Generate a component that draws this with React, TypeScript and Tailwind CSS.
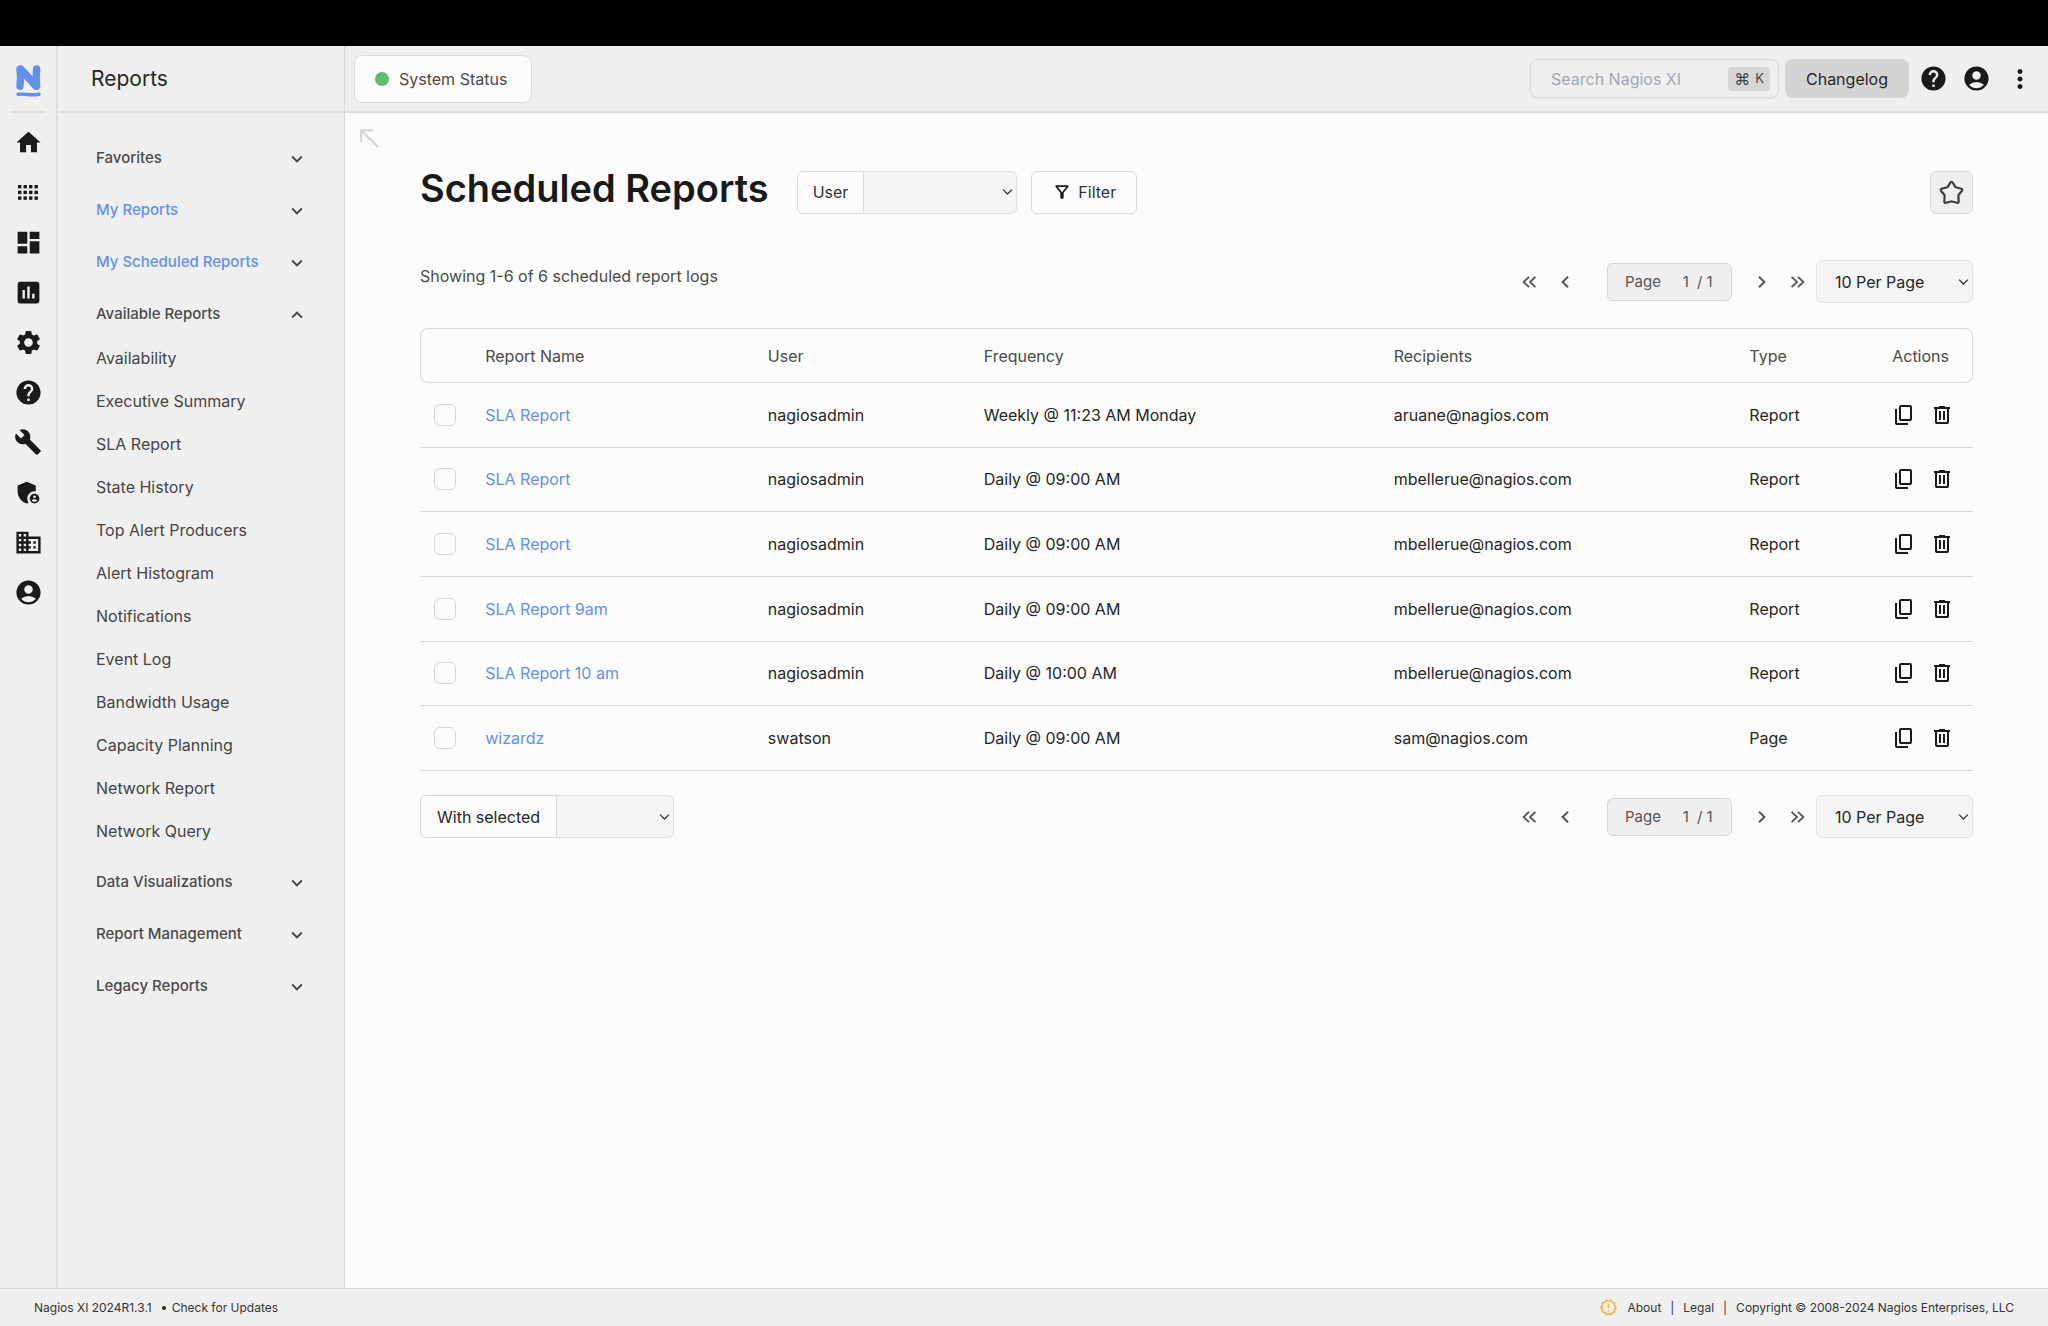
import { useState } from 'react';
import {
  MdHome,
  MdDashboard,
  MdAssessment,
  MdSettings,
  MdHelp,
  MdBuild,
  MdAdminPanelSettings,
  MdDomain,
  MdAccountCircle,
  MdMoreVert,
  MdExpandMore,
  MdExpandLess,
  MdOutlineFilterAlt,
  MdOutlineNewReleases,
} from 'react-icons/md';

const reportItems = [
  'Availability',
  'Executive Summary',
  'SLA Report',
  'State History',
  'Top Alert Producers',
  'Alert Histogram',
  'Notifications',
  'Event Log',
  'Bandwidth Usage',
  'Capacity Planning',
  'Network Report',
  'Network Query',
];

const sections = [
  { title: 'Favorites' },
  { title: 'My Reports', active: true },
  { title: 'My Scheduled Reports', active: true },
  { title: 'Available Reports', items: reportItems },
  { title: 'Data Visualizations' },
  { title: 'Report Management' },
  { title: 'Legacy Reports' },
];

const reports = [
  { name: 'SLA Report', user: 'nagiosadmin', frequency: 'Weekly @ 11:23 AM Monday', recipients: 'aruane@nagios.com', type: 'Report' },
  { name: 'SLA Report', user: 'nagiosadmin', frequency: 'Daily @ 09:00 AM', recipients: 'mbellerue@nagios.com', type: 'Report' },
  { name: 'SLA Report', user: 'nagiosadmin', frequency: 'Daily @ 09:00 AM', recipients: 'mbellerue@nagios.com', type: 'Report' },
  { name: 'SLA Report 9am', user: 'nagiosadmin', frequency: 'Daily @ 09:00 AM', recipients: 'mbellerue@nagios.com', type: 'Report' },
  { name: 'SLA Report 10 am', user: 'nagiosadmin', frequency: 'Daily @ 10:00 AM', recipients: 'mbellerue@nagios.com', type: 'Report' },
  { name: 'wizardz', user: 'swatson', frequency: 'Daily @ 09:00 AM', recipients: 'sam@nagios.com', type: 'Page' },
];

function AppsIcon() {
  return (
    <svg viewBox="0 0 20 15" className="w-5" fill="currentColor">
      {[0, 5.7, 11.4].map((y) =>
        [0, 5.5, 11, 16.5].map((x) => <rect key={`${x}-${y}`} x={x} y={y} width="3.4" height="3.4" />)
      )}
    </svg>
  );
}

const railItems = [
  { label: 'Home', icon: <MdHome size={29} /> },
  { label: 'Views', icon: <AppsIcon /> },
  { label: 'Dashboards', icon: <MdDashboard size={29} /> },
  { label: 'Reports', icon: <MdAssessment size={29} /> },
  { label: 'Configure', icon: <MdSettings size={29} /> },
  { label: 'Help', icon: <MdHelp size={29} /> },
  { label: 'Tools', icon: <MdBuild size={28} /> },
  { label: 'Admin', icon: <MdAdminPanelSettings size={29} /> },
  { label: 'Enterprise', icon: <MdDomain size={29} /> },
  { label: 'Account', icon: <MdAccountCircle size={29} /> },
];

function Logo() {
  return (
    <svg viewBox="0 0 25 32" className="w-[25px]" fill="none" stroke="#6190f3" strokeLinecap="round" strokeLinejoin="round">
      <path d="M4 4.2 4.6 12 4 21.2M20.6 4 20.2 12 20.6 21.2" strokeWidth="7.4" />
      <path d="M5 4.6 19.8 20.6" strokeWidth="8" />
      <path d="M2 29.2Q7 28.9 12 29.5T23 29.2" strokeWidth="3.4" />
    </svg>
  );
}

function SelectChevron() {
  return (
    <svg
      viewBox="0 0 12 8"
      className="pointer-events-none absolute right-1 top-1/2 w-[11px] -translate-y-1/2"
      fill="none"
      stroke="#333"
      strokeWidth="1.4"
    >
      <path d="M1.2 1.4 6 6.2 10.8 1.4" />
    </svg>
  );
}

function Pagination({ id }: { id: string }) {
  const [page, setPage] = useState('1');
  const arrow = 'flex h-9 w-9 items-center justify-center text-[#555]';

  return (
    <div className="flex items-center">
      <button type="button" aria-label="First page" className={arrow}>
        <svg viewBox="0 0 16 12" className="w-4" fill="none" stroke="currentColor" strokeWidth="1.8">
          <path d="M8 .8 2.6 6 8 11.2M14.4.8 9 6l5.4 5.2" />
        </svg>
      </button>
      <button type="button" aria-label="Previous page" className={arrow}>
        <svg viewBox="0 0 16 12" className="w-4" fill="none" stroke="currentColor" strokeWidth="2">
          <path d="M11 .8 5.6 6l5.4 5.2" />
        </svg>
      </button>
      <div className="ml-6 mr-3 flex h-[38px] w-[125px] items-center rounded-md border border-[#d6d6d6] bg-[#efefef] pl-[17px] text-[15px] leading-6 text-[#555]">
        <label htmlFor={id}>Page</label>
        <input
          id={id}
          value={page}
          onChange={(e) => setPage(e.target.value)}
          className="w-[28px] bg-transparent text-right focus:outline-none"
        />
        <span className="ml-2">/ 1</span>
      </div>
      <button type="button" aria-label="Next page" className={arrow}>
        <svg viewBox="0 0 16 12" className="w-4" fill="none" stroke="currentColor" strokeWidth="2">
          <path d="M5 .8 10.4 6 5 11.2" />
        </svg>
      </button>
      <button type="button" aria-label="Last page" className={arrow}>
        <svg viewBox="0 0 16 12" className="w-4" fill="none" stroke="currentColor" strokeWidth="1.8">
          <path d="M1.6.8 7 6l-5.4 5.2M8 .8 13.4 6 8 11.2" />
        </svg>
      </button>
      <div className="relative">
        <select
          aria-label="Rows per page"
          className="h-[43px] w-[157px] appearance-none rounded-md border border-[#e2e2e2] bg-[#f4f4f4] pl-[18px] text-base text-[#262626]"
        >
          <option>10 Per Page</option>
          <option>25 Per Page</option>
          <option>50 Per Page</option>
        </select>
        <SelectChevron />
      </div>
    </div>
  );
}

export default function App() {
  const [search, setSearch] = useState('');

  return (
    <div className="flex min-h-screen flex-col bg-[#fbfbfb] font-['Inter','Liberation_Sans',sans-serif] text-base text-[#262626]">
      <div className="h-[46px] bg-black" />

      <div className="flex flex-1">
        <nav className="flex w-[58px] shrink-0 flex-col items-center border-r-2 border-[#dedede] bg-[#efefef] pt-[19px] text-[#1a1a1a]">
          <a href="#" aria-label="Nagios XI">
            <Logo />
          </a>
          <div className="mb-1 mt-[14px] h-[2px] w-[35px] bg-[#dedede]" />
          {railItems.map((item) => (
            <a key={item.label} href="#" aria-label={item.label} className="flex h-[50px] w-full items-center justify-center">
              {item.icon}
            </a>
          ))}
        </nav>

        <aside className="w-[287px] shrink-0 border-r border-[#d9d9d9] bg-[#efefef]">
          <div className="flex h-[67px] items-center border-b-2 border-[#dedede] pl-[33px] text-[21px] text-[#262626]">
            Reports
          </div>
          <div className="flex flex-col gap-[9px] pl-[38px] pr-9 pt-6 text-[#4a4a4a]">
            {sections.map((s) => (
              <div key={s.title}>
                <button
                  type="button"
                  className={`flex h-[43px] w-full items-center justify-between text-[15px] font-medium ${s.active ? 'text-[#6190f3]' : ''}`}
                >
                  {s.title}
                  {s.items ? <MdExpandLess size={22} color="#444" /> : <MdExpandMore size={22} color="#444" />}
                </button>
                {s.items?.map((item) => (
                  <a key={item} href="#" className="flex h-[43px] items-center text-[#444]">
                    {item}
                  </a>
                ))}
              </div>
            ))}
          </div>
        </aside>

        <div className="flex flex-1 flex-col">
          <header className="flex h-[67px] items-center justify-between border-b-2 border-[#dedede] bg-[#efefef] pl-[9px] pr-[13px]">
            <button
              type="button"
              className="flex h-12 items-center gap-[10px] rounded-lg border border-[#dcdcdc] bg-[#fbfbfb] pl-5 pr-6 text-[#4a4a4a]"
            >
              <span className="h-[14px] w-[14px] rounded-full bg-[#5bc068]" />
              System Status
            </button>
            <div className="flex items-center">
              <div className="flex h-[39px] w-[249px] items-center rounded-lg border border-[#dadada] pl-5 pr-2 shadow-xs">
                <input
                  type="text"
                  aria-label="Search Nagios XI"
                  value={search}
                  onChange={(e) => setSearch(e.target.value)}
                  placeholder="Search Nagios XI"
                  className="min-w-0 flex-1 bg-transparent placeholder:text-[#a3a7b3] focus:outline-none"
                />
                <kbd className="flex h-6 w-[42px] items-center justify-center gap-[5px] rounded bg-[#d6d6d6] font-['Inter','DejaVu_Sans',sans-serif] text-[13px] text-[#444]">
                  <span className="text-base">⌘</span>
                  <span>K</span>
                </kbd>
              </div>
              <button type="button" className="ml-[6px] h-[39px] w-[124px] rounded-lg bg-[#d4d4d4]">
                Changelog
              </button>
              <button type="button" aria-label="Help" className="ml-[10px] text-[#1a1a1a]">
                <MdHelp size={29} />
              </button>
              <button type="button" aria-label="Account" className="ml-[14px] text-[#1a1a1a]">
                <MdAccountCircle size={29} />
              </button>
              <button type="button" aria-label="More" className="ml-[14px] text-[#1a1a1a]">
                <MdMoreVert size={30} />
              </button>
            </div>
          </header>

          <main className="flex-1">
            <button type="button" aria-label="Collapse sidebar" className="ml-[15px] mt-4 block text-[#d2d2d2]">
              <svg viewBox="0 0 19 19" className="w-[19px]" fill="none" stroke="currentColor" strokeWidth="2">
                <path d="M1.2 13V1.2H13M1.2 1.2 18 18" />
              </svg>
            </button>

            <div className="px-[75px] pt-[22px]">
              <div className="flex items-center">
                <h1 className="pb-2 text-[38px] font-semibold leading-9 text-[#1a1a1a]">Scheduled Reports</h1>
                <div className="ml-7 flex">
                  <label
                    htmlFor="user"
                    className="flex h-[43px] items-center rounded-l-md border border-[#dcdcdc] px-[15px] text-[#333]"
                  >
                    User
                  </label>
                  <div className="relative">
                    <select
                      id="user"
                      className="h-[43px] w-[153px] appearance-none rounded-r-md border border-l-0 border-[#e0e0e0] bg-[#f4f4f4]"
                    >
                      <option></option>
                    </select>
                    <SelectChevron />
                  </div>
                </div>
                <button
                  type="button"
                  className="ml-[14px] flex h-[43px] items-center gap-[6px] rounded-md border border-[#dcdcdc] px-5 text-[#333]"
                >
                  <MdOutlineFilterAlt size={20} color="#1a1a1a" />
                  Filter
                </button>
                <button
                  type="button"
                  aria-label="Add to favorites"
                  className="ml-auto flex h-[43px] w-[43px] items-center justify-center rounded-md border border-[#d9d9d9] bg-[#efefef] text-[#3c3c3c]"
                >
                  <svg viewBox="0 0 24 24" className="w-[25px]" fill="none" stroke="currentColor" strokeWidth="2.1">
                    <path d="M10.9 2.4Q12 .9 13.1 2.4L15.6 6.6Q15.8 6.9 16.2 7L21.4 8.4Q23.2 9 22 10.5L18.9 14.2Q18.6 14.6 18.6 15L18.9 20.6Q18.9 22.3 17.4 21.9L12.4 20.6Q12 20.5 11.6 20.6L6.6 21.9Q5.1 22.3 5.1 20.6L5.4 15Q5.4 14.6 5.1 14.2L2 10.5Q.8 9 2.6 8.4L7.8 7Q8.2 6.9 8.4 6.6Z" />
                  </svg>
                </button>
              </div>

              <div className="mt-[46px] flex items-center justify-between">
                <p className="pb-3 text-[#4a4a4a]">Showing 1-6 of 6 scheduled report logs</p>
                <Pagination id="page-top" />
              </div>

              <table className="mt-[25px] h-[443px] w-full table-fixed border-separate border-spacing-0 text-left">
                <thead>
                  <tr className="text-[#4a4a4a] *:h-[55px] *:border-y *:border-[#dcdcdc] *:font-normal">
                    <th className="w-[4.2%] rounded-l-lg border-l" />
                    <th className="w-[18.2%]">Report Name</th>
                    <th className="w-[13.9%]">User</th>
                    <th className="w-[26.4%]">Frequency</th>
                    <th className="w-[22.9%]">Recipients</th>
                    <th className="w-[9.2%]">Type</th>
                    <th className="rounded-r-lg border-r">Actions</th>
                  </tr>
                </thead>
                <tbody>
                  {reports.map((r, i) => (
                    <tr key={i} className="*:border-b *:border-[#d9d9d9]">
                      <td>
                        <input
                          type="checkbox"
                          aria-label={`Select ${r.name}`}
                          className="ml-[14px] block h-[22px] w-[22px] appearance-none rounded-md border border-[#d6d6d6] checked:bg-[#6190f3]"
                        />
                      </td>
                      <td>
                        <a href="#" className="text-[#6190f3]">
                          {r.name}
                        </a>
                      </td>
                      <td>{r.user}</td>
                      <td>{r.frequency}</td>
                      <td>{r.recipients}</td>
                      <td>{r.type}</td>
                      <td>
                        <div className="flex gap-[14px] text-[#1a1a1a]">
                          <button type="button" aria-label="Copy">
                            <svg viewBox="0 0 24 24" className="w-6" fill="currentColor">
                              <path d="M9 18q-.825 0-1.413-.588T7 16V4q0-.825.587-1.413T9 2h9q.825 0 1.413.587T20 4v12q0 .825-.588 1.412T18 18H9Zm0-2h9V4H9v12Zm-4 6q-.825 0-1.413-.588T3 20V6h2v14h11v2H5Z" />
                            </svg>
                          </button>
                          <button type="button" aria-label="Delete">
                            <svg viewBox="0 0 24 24" className="w-6" fill="currentColor">
                              <path d="M7 21q-.825 0-1.413-.588T5 19V6H4V4h5V3h6v1h5v2h-1v13q0 .825-.588 1.413T17 21H7ZM17 6H7v13h10V6ZM9 17h2V8H9v9Zm4 0h2V8h-2v9Z" />
                            </svg>
                          </button>
                        </div>
                      </td>
                    </tr>
                  ))}
                </tbody>
              </table>

              <div className="mt-6 flex items-center justify-between">
                <div className="flex">
                  <label
                    htmlFor="bulk"
                    className="flex h-[43px] items-center rounded-l-md border border-[#d6d6d6] px-4 text-[#262626]"
                  >
                    With selected
                  </label>
                  <div className="relative">
                    <select
                      id="bulk"
                      className="h-[43px] w-[117px] appearance-none rounded-r-md border border-l-0 border-[#e0e0e0] bg-[#f4f4f4]"
                    >
                      <option></option>
                    </select>
                    <SelectChevron />
                  </div>
                </div>
                <Pagination id="page-bottom" />
              </div>
            </div>
          </main>
        </div>
      </div>

      <footer className="flex h-[38px] items-center justify-between border-t border-[#d9d9d9] bg-[#efefef] px-[34px] text-xs text-[#333]">
        <div className="flex items-center">
          Nagios XI 2024R1.3.1
          <span className="ml-[10px] mr-[6px] h-1 w-1 rounded-full bg-[#262626]" />
          <a href="#">Check for Updates</a>
        </div>
        <div className="flex items-center gap-[9px]">
          <MdOutlineNewReleases size={19} color="#efb73e" />
          <a href="#">About</a>
          <span>|</span>
          <a href="#">Legal</a>
          <span>|</span>
          <span>Copyright © 2008-2024 Nagios Enterprises, LLC</span>
        </div>
      </footer>
    </div>
  );
}
